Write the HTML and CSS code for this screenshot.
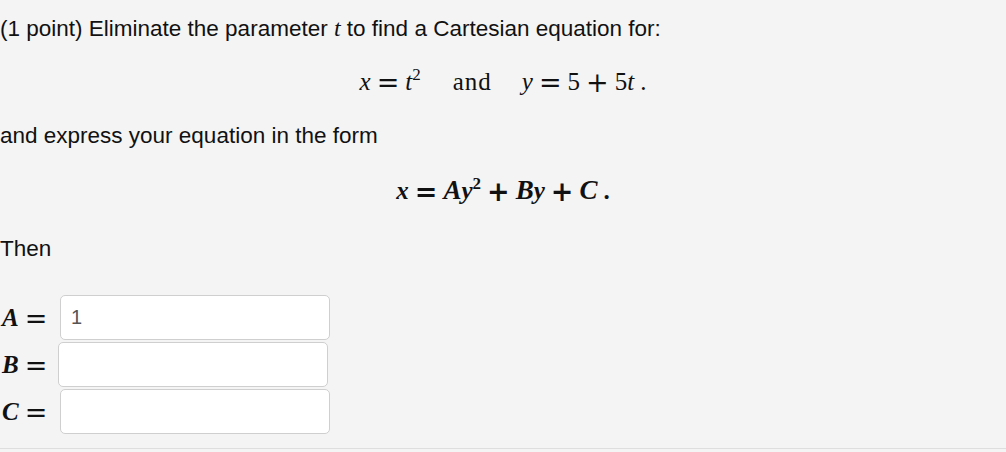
FILE: index.html
```html
<!DOCTYPE html>
<html lang="en">
<head>
  <meta charset="UTF-8">
  <title>Problem</title>
  <link rel="stylesheet" href="styles.css">
</head>
<body>
  <div class="problem">
    <p class="line first">(1 point) Eliminate the parameter <span class="mi">t</span> to find a Cartesian equation for:</p>
    <div class="display eq1"><span class="mi">x</span><span class="mo">=</span><span class="mi">t</span><sup>2</sup><span class="word">and</span><span class="mi">y</span><span class="mo">=</span>5<span class="mo">+</span>5<span class="mi">t</span><span class="dot">.</span></div>
    <p class="line form">and express your equation in the form</p>
    <div class="display eq2"><span class="mi">x</span><span class="mo">=</span><span class="mi cap">A</span><span class="mi">y</span><sup>2</sup><span class="mo">+</span><span class="mi cap">B</span><span class="mi">y</span><span class="mo">+</span><span class="mi cap">C</span><span class="dot">.</span></div>
    <p class="line then">Then</p>
    <div class="answers">
      <div class="answer">
        <label class="var"><span class="mi cap">A</span><span class="mo">=</span></label>
        <input type="text" class="box" value="1">
      </div>
      <div class="answer shift">
        <label class="var"><span class="mi cap">B</span><span class="mo">=</span></label>
        <input type="text" class="box" value="">
      </div>
      <div class="answer">
        <label class="var"><span class="mi cap">C</span><span class="mo">=</span></label>
        <input type="text" class="box" value="">
      </div>
    </div>
  </div>
</body>
</html>
```

FILE: styles.css
```css
html, body {
  margin: 0;
  padding: 0;
  background: #f4f4f4;
}
.problem {
  font-family: 'Liberation Sans', Arial, sans-serif;
  font-size: 22.5px;
  color: #111;
  height: 449px;
  border-bottom: 1px solid #dedede;
  box-sizing: border-box;
}
.line {
  margin: 0;
  line-height: 26px;
  white-space: nowrap;
}
.first {
  padding-top: 15px;
}
.form {
  margin-top: 28px;
}
.then {
  margin-top: 32px;
}
.mi {
  font-style: italic;
  font-family: 'Liberation Serif', 'Times New Roman', serif;
}
.line .mi {
  font-size: 24px;
}
.display {
  font-family: 'Liberation Serif', 'Times New Roman', serif;
  font-size: 25px;
  line-height: 26px;
  text-align: center;
  white-space: nowrap;
}
.display .cap {
  font-size: 27px;
  line-height: 0;
}
.mo {
  font-family: 'DejaVu Serif', serif;
  font-style: normal;
  font-weight: normal;
  font-size: 27px;
  line-height: 0;
  margin: 0 6px;
  vertical-align: -2px;
}
sup {
  font-size: 17px;
  line-height: 0;
  vertical-align: 10px;
}
.word {
  margin: 0 30px 0 32px;
  letter-spacing: 1px;
}
.dot {
  margin-left: 6px;
}
.eq1 {
  margin-top: 27px;
}
.eq2 {
  font-weight: bold;
  margin-top: 29px;
}
.eq2 .mo {
  font-weight: bold;
}
.answers {
  margin-top: 33px;
  display: flex;
  flex-direction: column;
  gap: 2px;
}
.answer {
  display: flex;
  align-items: center;
}
.var {
  font-family: 'Liberation Serif', 'Times New Roman', serif;
  font-weight: bold;
  font-size: 23px;
  width: 60px;
  padding-left: 2px;
  box-sizing: border-box;
  white-space: nowrap;
}
.var .cap {
  font-size: 25px;
}
.var .mo {
  margin: 0 0 0 6px;
}
.shift .var {
  width: 58px;
}
.box {
  width: 270px;
  height: 45px;
  box-sizing: border-box;
  border: 1px solid #cfcfcf;
  border-radius: 5px;
  background: #fff;
  font-family: 'Liberation Sans', Arial, sans-serif;
  font-size: 20px;
  color: #555;
  padding: 0 10px;
  margin: 0;
}
```
